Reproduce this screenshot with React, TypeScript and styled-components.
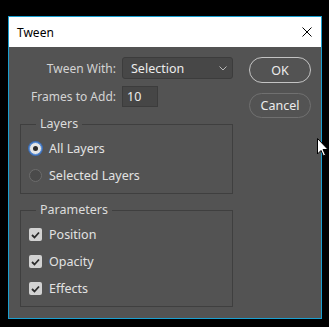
import React from "react";
import styled, { createGlobalStyle } from "styled-components";

const Global = createGlobalStyle`
  html, body { margin: 0; padding: 0; background: #000; }
  body { width: 329px; height: 327px; overflow: hidden; position: relative; }
  * { box-sizing: border-box; }
`;

const Window = styled.div`
  margin: 16px 0 0 8px;
  width: 314px;
  height: 303px;
  border: 1px solid #1a9fd0;
  display: flex;
  flex-direction: column;
  font-family: "Noto Sans", "Segoe UI", sans-serif;
`;

const TitleBar = styled.div`
  height: 30px;
  background: #fff;
  display: flex;
  align-items: center;
  justify-content: space-between;
  padding: 0 9px 0 8px;
`;

const Title = styled.span`
  font-size: 12px;
  color: #000;
  padding-top: 1px;
`;

const Body = styled.div`
  flex: 1;
  background: #535353;
  display: flex;
  padding: 10px 10px 0 11px;
  gap: 16px;
`;

const LeftCol = styled.div`
  width: 213px;
  display: flex;
  flex-direction: column;
`;

const FormGrid = styled.div`
  display: grid;
  grid-template-columns: 96px auto;
  column-gap: 6px;
  row-gap: 7px;
  align-items: center;
  margin-bottom: 9px;
`;

const Label = styled.span`
  text-align: right;
  font-size: 12px;
  color: #d4d4d4;
  white-space: nowrap;
`;

const Select = styled.div`
  width: 111px;
  height: 22px;
  background: #474747;
  border: 1px solid #3c3c3c;
  border-radius: 3px;
  display: flex;
  align-items: center;
  justify-content: space-between;
  padding: 0 5px 0 8px;
  font-size: 12.5px;
  color: #ececec;
`;

const Input = styled.div`
  width: 36px;
  height: 21px;
  background: #464646;
  border: 1px solid #3c3c3c;
  display: flex;
  align-items: center;
  padding-left: 4px;
  font-size: 12.5px;
  color: #ececec;
`;

const Group = styled.fieldset<{ $gap?: number }>`
  margin: 0 0 ${(p) => p.$gap ?? 0}px 0;
  padding: 3px 0 4px 8px;
  border: 1px solid #3f3f3f;
  min-width: 0;
  display: flex;
  flex-direction: column;
`;

const Legend = styled.legend`
  margin-left: 7px;
  padding: 0 4px;
  font-size: 12.5px;
  line-height: 16px;
  color: #dcdcdc;
`;

const OptionRow = styled.div`
  height: 27px;
  display: flex;
  align-items: center;
  gap: 7px;
  font-size: 12.5px;
  color: #e2e2e2;
`;

const Radio = styled.span<{ $on?: boolean }>`
  width: 13px;
  height: 13px;
  border-radius: 50%;
  flex: none;
  position: relative;
  background: ${(p) => (p.$on ? "#e6e6e6" : "#4a4a4a")};
  border: 1px solid ${(p) => (p.$on ? "#5b8fd6" : "#6c6c6c")};
  box-shadow: ${(p) => (p.$on ? "0 0 0 1px #3d6fb8" : "none")};
  &::after {
    content: "";
    display: ${(p) => (p.$on ? "block" : "none")};
    position: absolute;
    left: 3px;
    top: 3px;
    width: 5px;
    height: 5px;
    border-radius: 50%;
    background: #2a2a2a;
  }
`;

const Check = styled.span`
  width: 13px;
  height: 13px;
  border-radius: 2px;
  flex: none;
  background: #d2d2d2;
  display: flex;
  align-items: center;
  justify-content: center;
`;

const RightCol = styled.div`
  display: flex;
  flex-direction: column;
  gap: 10px;
`;

const Button = styled.div<{ $primary?: boolean }>`
  width: 62px;
  height: ${(p) => (p.$primary ? 26 : 25)}px;
  border-radius: 13px;
  border: ${(p) => (p.$primary ? "1.5px solid #c4c4c4" : "1px solid #707070")};
  display: flex;
  align-items: center;
  justify-content: center;
  font-size: 12.5px;
  color: #ececec;
`;

const Cursor = styled.svg`
  position: absolute;
  left: 317px;
  top: 138px;
`;

const CheckMark = () => (
  <svg width="9" height="8" viewBox="0 0 9 8">
    <path d="M1 4 L3.5 6.5 L8 1.5" fill="none" stroke="#2b2b2b" strokeWidth="1.8" />
  </svg>
);

export default function App() {
  return (
    <>
      <Global />
      <Window>
        <TitleBar>
          <Title>Tween</Title>
          <svg width="10" height="10" viewBox="0 0 10 10">
            <path d="M0.5 0.5 L9.5 9.5 M9.5 0.5 L0.5 9.5" stroke="#000" strokeWidth="1" />
          </svg>
        </TitleBar>
        <Body>
          <LeftCol>
            <FormGrid>
              <Label>Tween With:</Label>
              <Select>
                <span>Selection</span>
                <svg width="8" height="5" viewBox="0 0 8 5">
                  <path d="M0.5 0.5 L4 4 L7.5 0.5" fill="none" stroke="#b8b8b8" strokeWidth="1" />
                </svg>
              </Select>
              <Label>Frames to Add:</Label>
              <Input>10</Input>
            </FormGrid>
            <Group $gap={8}>
              <Legend>Layers</Legend>
              <OptionRow>
                <Radio $on />
                All Layers
              </OptionRow>
              <OptionRow>
                <Radio />
                Selected Layers
              </OptionRow>
            </Group>
            <Group>
              <Legend>Parameters</Legend>
              <OptionRow>
                <Check><CheckMark /></Check>
                Position
              </OptionRow>
              <OptionRow>
                <Check><CheckMark /></Check>
                Opacity
              </OptionRow>
              <OptionRow>
                <Check><CheckMark /></Check>
                Effects
              </OptionRow>
            </Group>
          </LeftCol>
          <RightCol>
            <Button $primary>OK</Button>
            <Button>Cancel</Button>
          </RightCol>
        </Body>
      </Window>
      <Cursor width="12" height="19" viewBox="0 0 12 19">
        <path d="M0.5 0.5 L0.5 16 L4 12.5 L6.5 18 L8.5 17 L6 11.5 L11 11.5 Z" fill="#fff" stroke="#000" strokeWidth="1" />
      </Cursor>
    </>
  );
}
